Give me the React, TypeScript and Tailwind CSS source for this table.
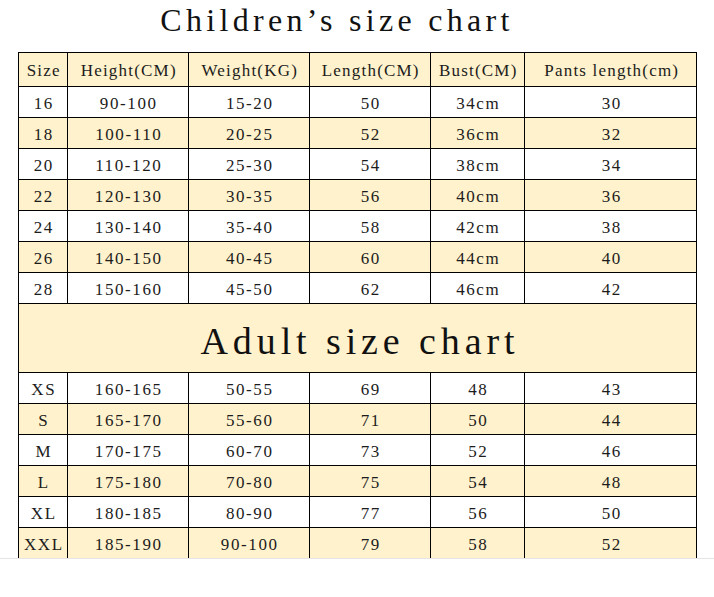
import React from "react";

const kids = [
  ["16", "90-100", "15-20", "50", "34cm", "30"],
  ["18", "100-110", "20-25", "52", "36cm", "32"],
  ["20", "110-120", "25-30", "54", "38cm", "34"],
  ["22", "120-130", "30-35", "56", "40cm", "36"],
  ["24", "130-140", "35-40", "58", "42cm", "38"],
  ["26", "140-150", "40-45", "60", "44cm", "40"],
  ["28", "150-160", "45-50", "62", "46cm", "42"],
];

const adults = [
  ["XS", "160-165", "50-55", "69", "48", "43"],
  ["S", "165-170", "55-60", "71", "50", "44"],
  ["M", "170-175", "60-70", "73", "52", "46"],
  ["L", "175-180", "70-80", "75", "54", "48"],
  ["XL", "180-185", "80-90", "77", "56", "50"],
  ["XXL", "185-190", "90-100", "79", "58", "52"],
];

const header = ["Size", "Height(CM)", "Weight(KG)", "Length(CM)", "Bust(CM)", "Pants length(cm)"];

const cols = "grid grid-cols-[48px_121px_121px_121px_94px_173px]";

function Row({ cells, cream, h, head }: { cells: string[]; cream: boolean; h: string; head?: boolean }) {
  return (
    <div className={`${cols} ${h} ${cream ? "bg-[#fff2cc]" : "bg-white"}`}>
      {cells.map((c, i) => (
        <div
          key={i}
          className={`flex items-center justify-center border-t border-black text-[17px] text-[#1c1c1c] pl-[1.5px] ${head ? "tracking-[1.2px] pt-[2px]" : "tracking-[1.6px] pt-[3px]"} ${i === 0 ? "" : "border-l"}`}
        >
          <span className="whitespace-pre">{c}</span>
        </div>
      ))}
    </div>
  );
}

export default function App() {
  return (
    <div
      className="relative w-[714px] h-[597px] bg-white overflow-hidden"
      style={{ fontFamily: '"Liberation Serif", "Noto Sans CJK SC", serif' }}
    >
      <div className="h-[52px] flex items-start justify-center pt-[4px] pr-[40px]">
        <span className="text-[32px] leading-[32px] text-[#111] tracking-[4.3px]">Children’s size chart</span>
      </div>
      <div className="ml-[18px] w-[679px] border-l border-r border-black">
        <Row cells={header} cream={true} h="h-[34px]" head />
        {kids.map((r, i) => (
          <Row key={r[0]} cells={r} cream={i % 2 === 1} h="h-[31px]" />
        ))}
        <div className="h-[69px] border-t border-black bg-[#fff2cc] flex items-center justify-center pt-[6px] pl-[5px]">
          <span className="text-[38px] text-[#111] tracking-[4.9px]">Adult size chart</span>
        </div>
        {adults.map((r, i) => (
          <Row key={r[0]} cells={r} cream={i % 2 === 1} h="h-[31px]" />
        ))}
      </div>
      <div className="border-t border-[#e5e5e5]" />
    </div>
  );
}
